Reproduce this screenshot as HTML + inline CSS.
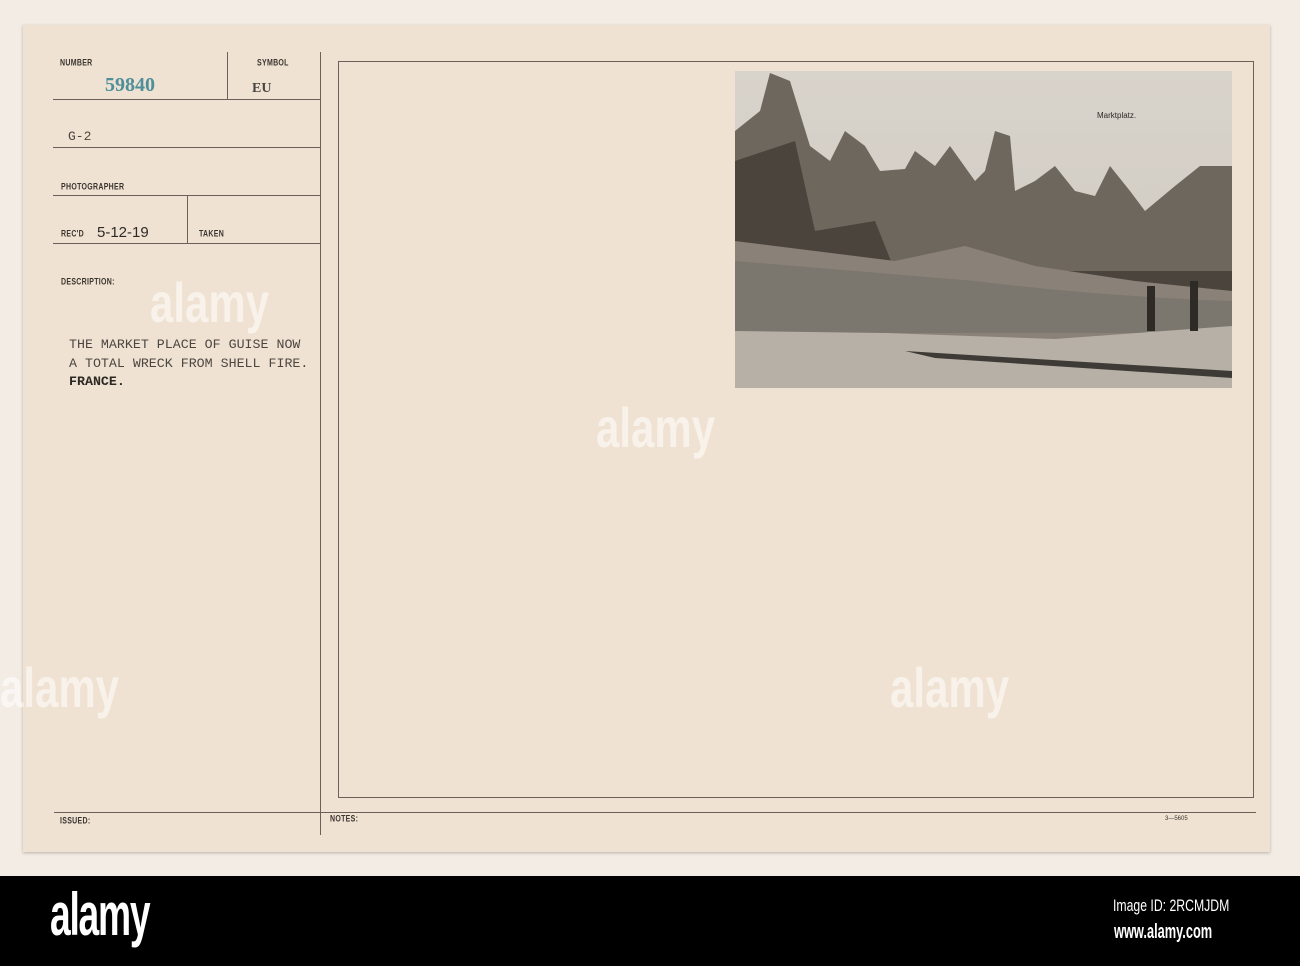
<!DOCTYPE html>
<html><head><style>
*{margin:0;padding:0}
body{width:1300px;height:966px;background:#f3ece4;position:relative;overflow:hidden;font-family:"Liberation Sans",sans-serif}
.card{position:absolute;left:23px;top:25px;width:1247px;height:827px;background:#efe2d2;box-shadow:0 1px 3px rgba(0,0,0,.25)}
.l{position:absolute;background:#6a625a}
.t{position:absolute;color:#3a342e;white-space:nowrap}
.s{font-size:7px;font-weight:bold;letter-spacing:.3px;transform:scaleY(1.3)}
.m{font-family:"Liberation Mono",monospace;color:#4c4640}
.wm{position:absolute;color:rgba(255,255,255,.55);font-weight:bold;font-family:"Liberation Sans Narrow","Liberation Sans",sans-serif;transform:scaleX(.75);transform-origin:left}
.band{position:absolute;left:0;top:876px;width:1300px;height:90px;background:#000}
</style></head><body>
<div class="card"></div>
<!-- lines -->
<div class="l" style="left:227px;top:52px;width:1px;height:47px"></div>
<div class="l" style="left:320px;top:52px;width:1px;height:783px"></div>
<div class="l" style="left:53px;top:99px;width:267px;height:1px"></div>
<div class="l" style="left:53px;top:147px;width:267px;height:1px"></div>
<div class="l" style="left:53px;top:195px;width:267px;height:1px"></div>
<div class="l" style="left:187px;top:195px;width:1px;height:48px"></div>
<div class="l" style="left:53px;top:243px;width:267px;height:1px"></div>
<div style="position:absolute;left:338px;top:61px;width:914px;height:735px;border:1px solid #6a625a"></div>
<div class="l" style="left:54px;top:812px;width:1202px;height:1px"></div>
<!-- text -->
<div class="t s" style="left:60px;top:60px">NUMBER</div>
<div class="t" style="left:105px;top:74px;font-family:'Liberation Serif',serif;font-size:20px;color:#4e8f9a;font-weight:bold">59840</div>
<div class="t s" style="left:257px;top:60px">SYMBOL</div>
<div class="t m" style="left:252px;top:81px;font-size:14px;font-family:'Liberation Serif',serif;font-weight:bold">EU</div>
<div class="t m" style="left:68px;top:129px;font-size:13px">G-2</div>
<div class="t s" style="left:61px;top:184px">PHOTOGRAPHER</div>
<div class="t s" style="left:61px;top:231px">REC'D</div>
<div class="t" style="left:97px;top:224px;font-size:15px;color:#2e2a26">5-12-19</div>
<div class="t s" style="left:199px;top:231px">TAKEN</div>
<div class="t s" style="left:61px;top:279px">DESCRIPTION:</div>
<div class="t m" style="left:69px;top:336px;font-size:13.3px;line-height:18.5px">THE MARKET PLACE OF GUISE NOW<br>A TOTAL WRECK FROM SHELL FIRE.<br><b style="color:#2c2824">FRANCE.</b></div>
<div class="t s" style="left:60px;top:818px">ISSUED:</div>
<div class="t s" style="left:330px;top:816px">NOTES:</div>
<div class="t" style="left:1165px;top:816px;font-size:6px">3—5605</div>
<!-- photo -->
<svg style="position:absolute;left:735px;top:71px" width="497" height="317" viewBox="0 0 497 317">
<defs><linearGradient id="sky" x1="0" y1="0" x2="0" y2="1"><stop offset="0" stop-color="#d8d3cb"/><stop offset="1" stop-color="#cfc9bf"/></linearGradient></defs>
<rect width="497" height="317" fill="url(#sky)"/>
<path d="M0 60 L25 40 L35 2 L55 10 L75 75 L95 90 L110 60 L130 75 L145 100 L170 98 L180 80 L200 95 L215 75 L240 110 L250 100 L260 60 L275 65 L280 120 L300 110 L320 95 L340 120 L360 125 L375 95 L395 120 L410 140 L440 115 L465 95 L497 95 L497 240 L0 240 Z" fill="#6e675e"/>
<path d="M0 90 L60 70 L80 160 L140 150 L160 200 L250 190 L300 200 L497 200 L497 250 L0 250 Z" fill="#4a443d"/>
<path d="M0 170 L80 180 L160 190 L230 175 L300 195 L400 210 L497 220 L497 270 L0 275 Z" fill="#8a8278"/>
<path d="M0 190 Q120 200 240 210 Q360 225 497 230 L497 262 L0 262 Z" fill="#75706a" opacity=".7"/>
<path d="M0 260 L150 262 L320 268 L497 255 L497 317 L0 317 Z" fill="#b6b0a6"/>
<path d="M170 280 L497 300 L497 307 L200 287 Z" fill="#3e3a35"/>
<rect x="412" y="215" width="8" height="45" fill="#2e2a26"/><rect x="455" y="210" width="8" height="50" fill="#2e2a26"/>
<text x="362" y="47" font-size="8" fill="#2e2a26" font-family="Liberation Sans">Marktplatz.</text>
</svg>
<!-- watermarks -->
<div class="wm" style="left:150px;top:270px;font-size:56px">alamy</div>
<div class="wm" style="left:596px;top:395px;font-size:56px">alamy</div>
<div class="wm" style="left:890px;top:655px;font-size:56px">alamy</div>
<div class="wm" style="left:0px;top:655px;font-size:56px">alamy</div>
<div class="band"></div>
<div style="position:absolute;left:50px;top:880px;color:#fff;font-weight:bold;font-size:60px;font-family:'Liberation Sans Narrow','Liberation Sans',sans-serif;transform:scaleX(.62);transform-origin:left;letter-spacing:-2px">alamy</div>
<div style="position:absolute;left:1113px;top:896px;color:#fff;font-size:17px;transform:scaleX(.72);transform-origin:left;white-space:nowrap">Image ID: 2RCMJDM</div>
<div style="position:absolute;left:1114px;top:921px;color:#fff;font-size:20px;font-weight:bold;transform:scaleX(.64);transform-origin:left;white-space:nowrap">www.alamy.com</div>
</body></html>
